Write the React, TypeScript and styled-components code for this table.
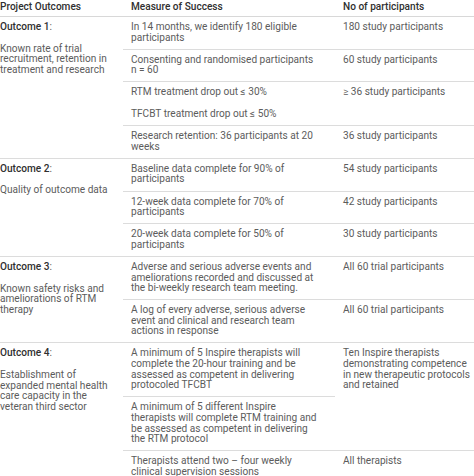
import React from "react";
import styled, { createGlobalStyle } from "styled-components";

const GlobalStyle = createGlobalStyle`
  html, body {
    margin: 0;
    padding: 0;
    background: #ffffff;
    overflow: hidden;
  }
  body {
    font-family: Roboto, "Liberation Sans", Arial, sans-serif;
  }
`;

type Measure = {
  text: string[][];
  count?: string[];
  countRows?: number;
};

type Outcome = {
  title: string;
  description: string[];
  measures: Measure[];
};

const outcomes: Outcome[] = [
  {
    title: "Outcome 1",
    description: ["Known rate of trial", "recruitment, retention in", "treatment and research"],
    measures: [
      {
        text: [["In 14 months, we identify 180 eligible", "participants"]],
        count: ["180 study participants"],
      },
      {
        text: [["Consenting and randomised participants", "n = 60"]],
        count: ["60 study participants"],
      },
      {
        text: [["RTM treatment drop out \u2264 30%"], ["TFCBT treatment drop out \u2264 50%"]],
        count: ["\u2265 36 study participants"],
      },
      {
        text: [["Research retention: 36 participants at 20", "weeks"]],
        count: ["36 study participants"],
      },
    ],
  },
  {
    title: "Outcome 2",
    description: ["Quality of outcome data"],
    measures: [
      {
        text: [["Baseline data complete for 90% of", "participants"]],
        count: ["54 study participants"],
      },
      {
        text: [["12-week data complete for 70% of", "participants"]],
        count: ["42 study participants"],
      },
      {
        text: [["20-week data complete for 50% of", "participants"]],
        count: ["30 study participants"],
      },
    ],
  },
  {
    title: "Outcome 3",
    description: ["Known safety risks and", "ameliorations of RTM", "therapy"],
    measures: [
      {
        text: [
          [
            "Adverse and serious adverse events and",
            "ameliorations recorded and discussed at",
            "the bi-weekly research team meeting.",
          ],
        ],
        count: ["All 60 trial participants"],
      },
      {
        text: [
          [
            "A log of every adverse, serious adverse",
            "event and clinical and research team",
            "actions in response",
          ],
        ],
        count: ["All 60 trial participants"],
      },
    ],
  },
  {
    title: "Outcome 4",
    description: ["Establishment of", "expanded mental health", "care capacity in the", "veteran third sector"],
    measures: [
      {
        text: [
          [
            "A minimum of 5 Inspire therapists will",
            "complete the 20-hour training and be",
            "assessed as competent in delivering",
            "protocoled TFCBT",
          ],
        ],
        count: [
          "Ten Inspire therapists",
          "demonstrating competence",
          "in new therapeutic protocols",
          "and retained",
        ],
        countRows: 2,
      },
      {
        text: [
          [
            "A minimum of 5 different Inspire",
            "therapists will complete RTM training and",
            "be assessed as competent in delivering",
            "the RTM protocol",
          ],
        ],
      },
      {
        text: [["Therapists attend two \u2013 four weekly", "clinical supervision sessions"]],
        count: ["All therapists"],
      },
    ],
  },
];

const Table = styled.table`
  width: 490px;
  border-collapse: collapse;
  table-layout: fixed;
  font-size: 10.1px;
  line-height: 10.6px;
  color: #5c5c5c;
`;

const HeadCell = styled.th<{ $first?: boolean }>`
  text-align: left;
  font-weight: 500;
  color: #2f2f2f;
  padding: 1.5px 0 4px ${(p) => (p.$first ? "0" : "8px")};
  border-bottom: 1px solid #d8d8d8;
  white-space: nowrap;
`;

const Cell = styled.td<{ $first?: boolean }>`
  vertical-align: top;
  text-align: left;
  padding: 5px 0 5.5px ${(p) => (p.$first ? "0" : "8px")};
  border-bottom: 1px solid #dcdcdc;
  white-space: nowrap;
`;

const OutcomeTitle = styled.div`
  color: #2f2f2f;
  font-weight: 500;

  span {
    color: #5c5c5c;
    font-weight: 400;
  }
`;

const Para = styled.div`
  & + & {
    margin-top: 11px;
  }
`;

const Description = styled.div`
  margin-top: 11px;
`;

const Lines = ({ lines }: { lines: string[] }) => (
  <>
    {lines.map((l, i) => (
      <React.Fragment key={i}>
        {i > 0 && <br />}
        {l}
      </React.Fragment>
    ))}
  </>
);

export default function App() {
  return (
    <>
      <GlobalStyle />
      <Table>
        <colgroup>
          <col style={{ width: 123 }} />
          <col style={{ width: 212 }} />
          <col style={{ width: 155 }} />
        </colgroup>
        <thead>
          <tr>
            <HeadCell $first>Project Outcomes</HeadCell>
            <HeadCell>Measure of Success</HeadCell>
            <HeadCell>No of participants</HeadCell>
          </tr>
        </thead>
        <tbody>
          {outcomes.map((o) =>
            o.measures.map((m, i) => (
              <tr key={o.title + i}>
                {i === 0 && (
                  <Cell $first rowSpan={o.measures.length}>
                    <OutcomeTitle>
                      {o.title}
                      <span>:</span>
                    </OutcomeTitle>
                    <Description>
                      <Lines lines={o.description} />
                    </Description>
                  </Cell>
                )}
                <Cell>
                  {m.text.map((p, j) => (
                    <Para key={j}>
                      <Lines lines={p} />
                    </Para>
                  ))}
                </Cell>
                {m.count && (
                  <Cell rowSpan={m.countRows}>
                    <Lines lines={m.count} />
                  </Cell>
                )}
              </tr>
            ))
          )}
        </tbody>
      </Table>
    </>
  );
}
